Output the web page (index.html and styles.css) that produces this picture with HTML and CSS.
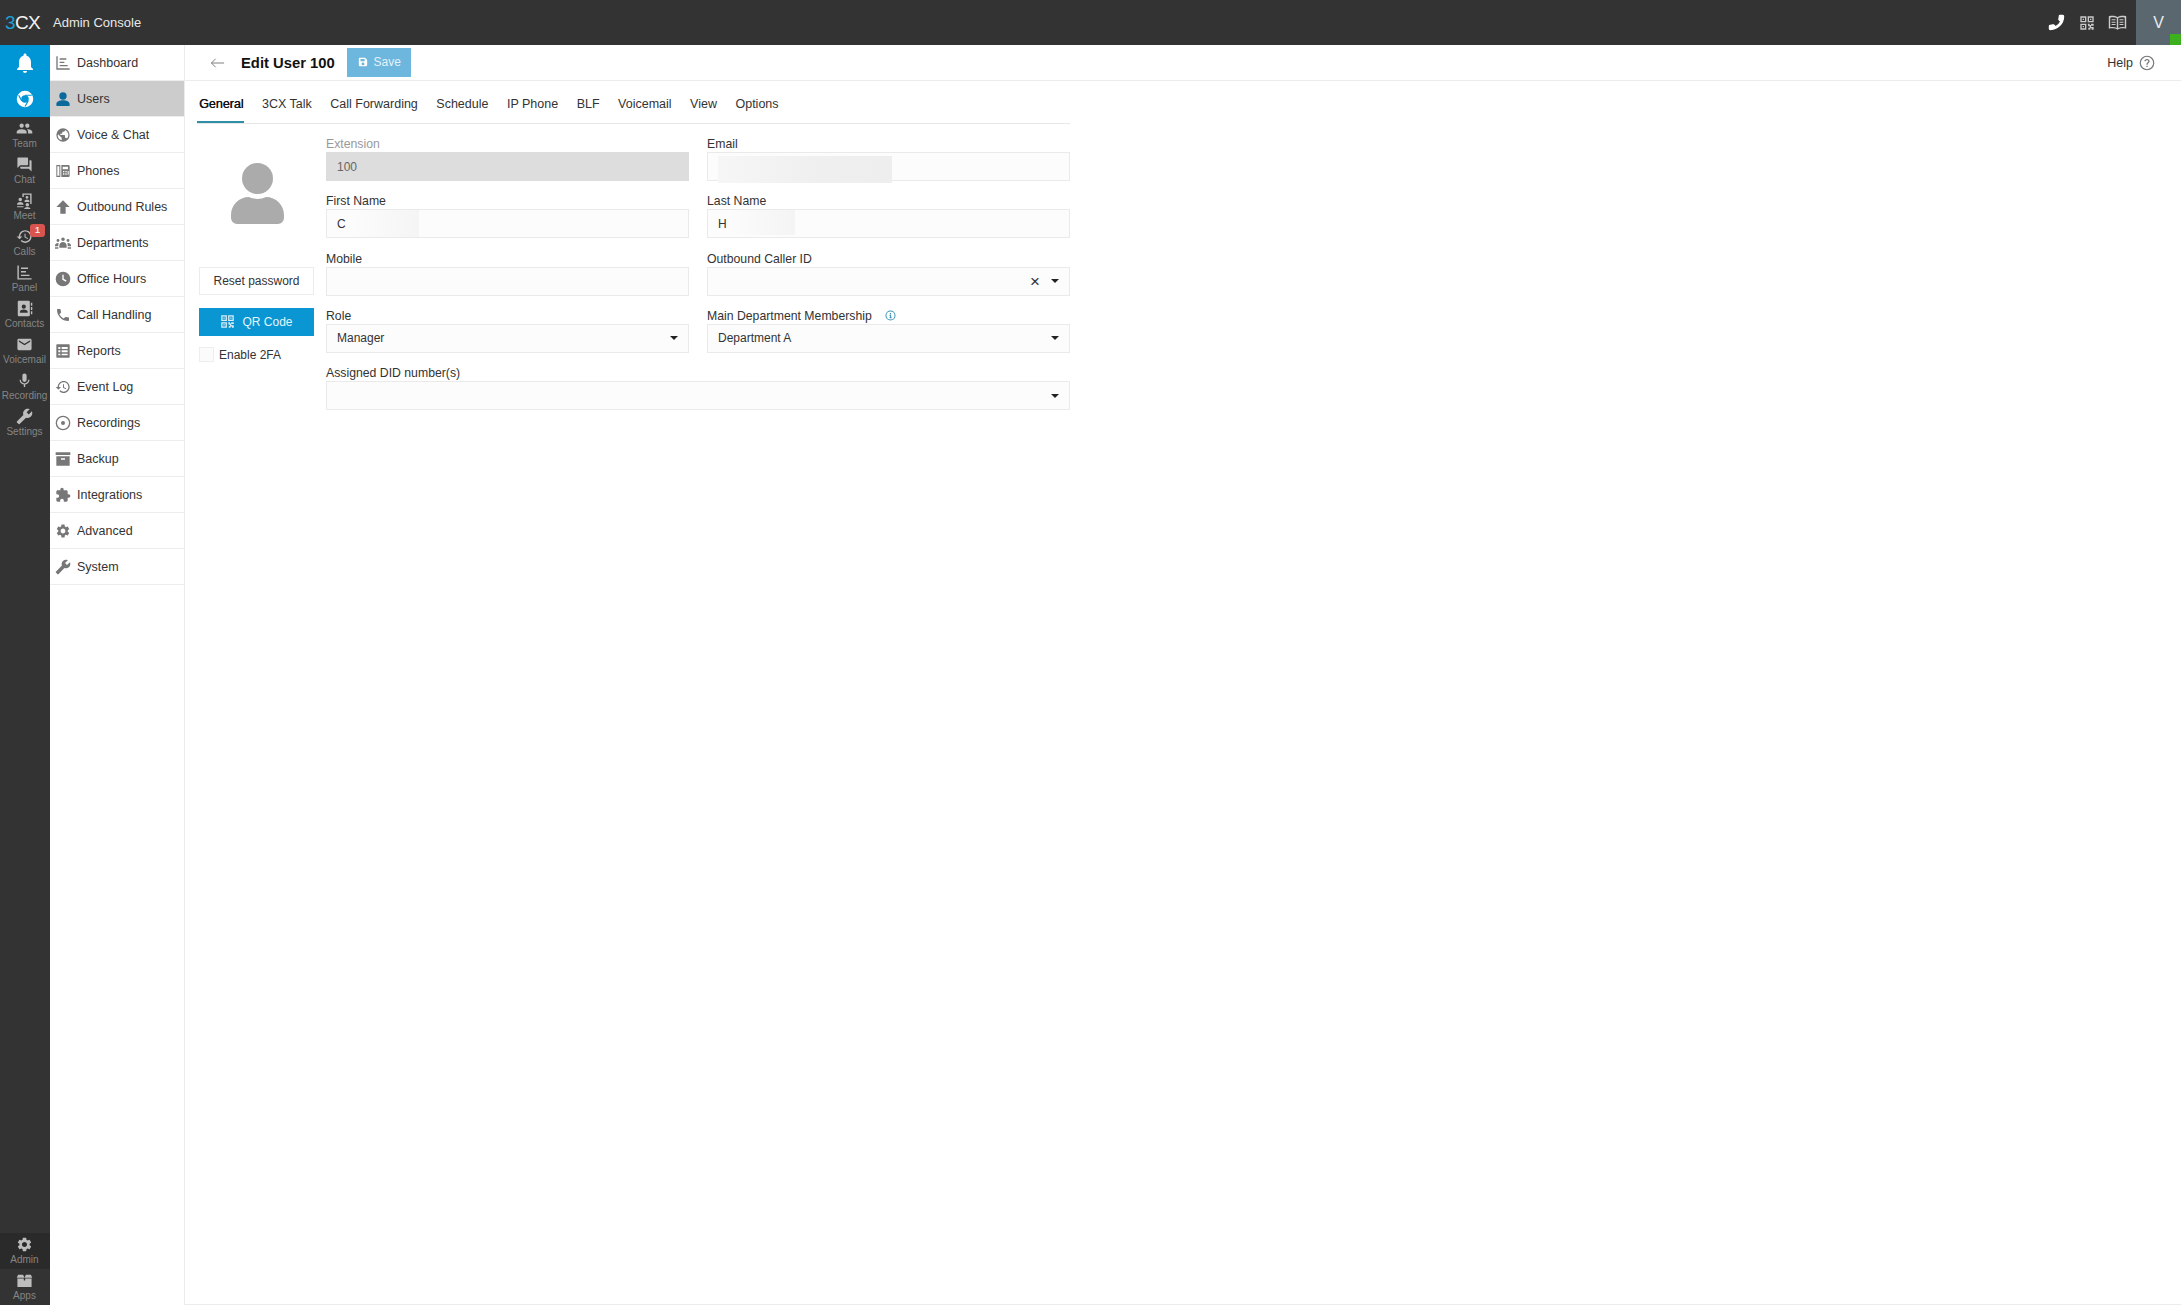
FILE: index.html
```html
<!DOCTYPE html>
<html lang="en">
<head>
<meta charset="utf-8">
<title>Admin Console</title>
<link rel="stylesheet" href="styles.css">
</head>
<body>
<svg class="sprite" xmlns="http://www.w3.org/2000/svg">
  <symbol id="i-bell" viewBox="0 0 24 24"><path d="M12 22c1.100 0 2-.9 2-2h-4c0 1.100.9 2 2 2zm6-6v-5c0-3.070-1.630-5.640-4.500-6.320V4c0-.83-.67-1.500-1.500-1.500s-1.500.67-1.500 1.500v.68C7.640 5.360 6 7.920 6 11v5l-2 2v1h16v-1l-2-2z"/></symbol>
  <symbol id="i-chrome" viewBox="0 0 24 24"><path fill-rule="evenodd" d="M12 1a11 11 0 1 0 0 22 11 11 0 0 0 0-22zm0 6a5 5 0 1 1 0 10 5 5 0 0 1 0-10z"/><path class="chrome-slit" d="M12 7h9M7.700 14.500L3.500 7M16.300 14.500L12 22"/></symbol>
  <symbol id="i-group" viewBox="0 0 24 24"><path d="M16 11c1.660 0 2.990-1.340 2.990-3S17.660 5 16 5c-1.660 0-3 1.340-3 3s1.340 3 3 3zm-8 0c1.660 0 2.990-1.340 2.990-3S9.660 5 8 5C6.340 5 5 6.340 5 8s1.340 3 3 3zm0 2c-2.330 0-7 1.170-7 3.500V19h14v-2.500c0-2.330-4.670-3.500-7-3.500zm8 0c-.29 0-.62.02-.97.05 1.160.84 1.970 1.970 1.970 3.450V19h6v-2.500c0-2.330-4.670-3.500-7-3.500z"/></symbol>
  <symbol id="i-chat" viewBox="0 0 24 24"><path d="M21 6h-2v9H6v2c0 .55.45 1 1 1h11l4 4V7c0-.55-.45-1-1-1zm-4 6V3c0-.55-.45-1-1-1H3c-.55 0-1 .45-1 1v14l4-4h10c.55 0 1-.45 1-1z"/></symbol>
  <symbol id="i-meet" viewBox="0 0 24 24"><path d="M9 2h13v15h-2V4H11v3H9zM15.500 5.500a2 2 0 1 1 0 4 2 2 0 0 1 0-4zM12 13c0-1.500 2-2.500 3.500-2.500S19 11.500 19 13v1h-7zM6 8a2.500 2.500 0 1 1 0 5 2.500 2.500 0 0 1 0-5zM1.500 17c0-2 3-3 4.500-3s4.500 1 4.500 3v1h-9zM16 15.500a2.500 2.500 0 1 1 0 5 2.500 2.500 0 0 1 0-5zM11.500 24c0-2 3-3 4.500-3s4.500 1 4.500 3zM1.500 20h9v1.500h-9z"/></symbol>
  <symbol id="i-history" viewBox="0 0 24 24"><path d="M13 3c-4.970 0-9 4.030-9 9H1l3.890 3.890.07.14L9 12H6c0-3.870 3.130-7 7-7s7 3.130 7 7-3.130 7-7 7c-1.930 0-3.680-.79-4.940-2.060l-1.420 1.420C8.270 19.990 10.510 21 13 21c4.970 0 9-4.030 9-9s-4.030-9-9-9zm-1 5v5l4.280 2.540.72-1.210-3.500-2.080V8H12z"/></symbol>
  <symbol id="i-panel" viewBox="0 0 24 24"><path d="M2 2h2v18h18v2H2zM7 5h10v2H7zM7 10h7v2H7zM7 15h12v2H7z"/></symbol>
  <symbol id="i-contacts" viewBox="0 0 24 24"><path fill-rule="evenodd" d="M4 1h14a1.500 1.500 0 0 1 1.500 1.500v19A1.500 1.500 0 0 1 18 23H4a1.500 1.500 0 0 1-1.500-1.500v-19A1.500 1.500 0 0 1 4 1zm7 5.500a3 3 0 1 0 0 6 3 3 0 0 0 0-6zM5.500 18h11v-1.500c0-2-3.500-3-5.500-3s-5.500 1-5.500 3zM21 4h2v4h-2zM21 10h2v4h-2zM21 16h2v4h-2z"/></symbol>
  <symbol id="i-mail" viewBox="0 0 24 24"><path d="M20 4H4c-1.100 0-1.990.9-1.990 2L2 18c0 1.100.9 2 2 2h16c1.100 0 2-.9 2-2V6c0-1.100-.9-2-2-2zm0 4l-8 5-8-5V6l8 5 8-5v2z"/></symbol>
  <symbol id="i-mic" viewBox="0 0 24 24"><path d="M12 14c1.660 0 2.990-1.340 2.990-3L15 5c0-1.660-1.340-3-3-3S9 3.340 9 5v6c0 1.660 1.340 3 3 3zm5.300-3c0 3-2.540 5.100-5.300 5.100S6.700 14 6.700 11H5c0 3.410 2.720 6.230 6 6.720V21h2v-3.280c3.280-.48 6-3.300 6-6.720h-1.700z"/></symbol>
  <symbol id="i-wrench" viewBox="0 0 24 24"><path transform="translate(24 0) scale(-1 1)" d="M22.700 19l-9.100-9.100c.9-2.300.4-5-1.500-6.900-2-2-5-2.400-7.400-1.300L9 6 6 9 1.600 4.700C.4 7.100.9 10.100 2.900 12.100c1.900 1.900 4.600 2.400 6.900 1.500l9.100 9.100c.4.4 1 .4 1.400 0l2.300-2.300c.5-.4.5-1.100.1-1.400z"/></symbol>
  <symbol id="i-gear" viewBox="0 0 24 24"><path d="M19.140 12.940c.04-.3.06-.61.06-.94 0-.32-.02-.64-.07-.94l2.030-1.580c.18-.14.23-.41.12-.61l-1.920-3.320c-.12-.22-.37-.29-.59-.22l-2.390.96c-.5-.38-1.030-.7-1.620-.94l-.36-2.540c-.04-.24-.24-.41-.48-.41h-3.840c-.24 0-.43.17-.47.41l-.36 2.540c-.59.24-1.130.57-1.620.94l-2.390-.96c-.22-.08-.47 0-.59.22L2.740 8.870c-.12.21-.08.47.12.61l2.030 1.580c-.05.3-.09.63-.09.94s.02.64.07.94l-2.030 1.580c-.18.14-.23.41-.12.61l1.920 3.320c.12.22.37.29.59.22l2.390-.96c.5.38 1.030.7 1.620.94l.36 2.540c.05.24.24.41.48.41h3.840c.24 0 .44-.17.47-.41l.36-2.540c.59-.24 1.130-.56 1.620-.94l2.390.96c.22.08.47 0 .59-.22l1.920-3.320c.12-.22.07-.47-.12-.61l-2.010-1.580zM12 15.600c-1.980 0-3.600-1.620-3.600-3.600s1.620-3.600 3.600-3.600 3.600 1.620 3.600 3.600-1.620 3.600-3.600 3.600z"/></symbol>
  <symbol id="i-apps" viewBox="0 0 24 24"><path fill-rule="evenodd" d="M2 9h20v12H2zM3 4h7l2 4H1zM14 4h7l2 4H12zM11 9h2v3h-2z"/></symbol>
  <symbol id="i-user" viewBox="0 0 24 24"><path d="M12 2a5.500 5.500 0 1 1 0 11 5.500 5.500 0 0 1 0-11zM2 20c0-4 5-6 10-6s10 2 10 6v1.500a1 1 0 0 1-1 1H3a1 1 0 0 1-1-1z"/></symbol>
  <symbol id="i-photo" viewBox="0 0 53 61"><circle cx="26.500" cy="15.500" r="15.500"/><path d="M0 52c0-10 8-18 18-18 5 2.500 12 2.500 17 0 10 0 18 8 18 18v3a6 6 0 0 1-6 6H6a6 6 0 0 1-6-6z"/></symbol>
  <symbol id="i-globe" viewBox="0 0 24 24"><path d="M12 2a10 10 0 1 0 0 20 10 10 0 0 0 0-20zm-1 17.900A8 8 0 0 1 4 12l1-.8 5 5v1.800c0 1 .5 1.900 1 1.900zm6.900-2.500A2 2 0 0 0 16 16h-1v-3a1 1 0 0 0-1-1H8v-2h2a1 1 0 0 0 1-1V7h2a2 2 0 0 0 2-2v-.4a8 8 0 0 1 2.900 12.800z"/></symbol>
  <symbol id="i-deskphone" viewBox="0 0 24 24"><path fill-rule="evenodd" d="M2 3h6v18H2zM3.500 5v14h3V5zM9.500 3H20a2 2 0 0 1 2 2v14a2 2 0 0 1-2 2H9.500zm2 2.500v4h8v-4zM12 12v2h2v-2zm3.500 0v2h2v-2zM12 15.500v2h2v-2zm3.500 0v2h2v-2zM19 12v5.500h1.500V12z"/></symbol>
  <symbol id="i-up" viewBox="0 0 24 24"><path d="M12 2l10 10h-6v10H8V12H2z"/></symbol>
  <symbol id="i-dept" viewBox="0 0 24 24"><path d="M12 9a2.700 2.700 0 1 1 0-5.400A2.700 2.700 0 0 1 12 9zM6.500 16c0-3 2.500-5.500 5.500-5.500s5.500 2.500 5.500 5.500v3h-11zM4.500 10.500a2.200 2.200 0 1 1 0-4.400 2.200 2.200 0 0 1 0 4.400zM0 16c0-2.500 2-4 4.500-4 .4 0 .6 0 1 .1A7 7 0 0 0 5 15v2H0zM19.500 10.500a2.200 2.200 0 1 1 0-4.400 2.200 2.200 0 0 1 0 4.400zM24 16v1h-5v-2a7 7 0 0 0-.5-2.900c.4-.1.600-.1 1-.1 2.500 0 4.500 1.500 4.500 4zM0 18.500h5v2H0zM19 18.500h5v2h-5z"/></symbol>
  <symbol id="i-clock" viewBox="0 0 24 24"><path fill-rule="evenodd" d="M12 1a11 11 0 1 0 0 22 11 11 0 0 0 0-22zm-1 4.500h2v6.200l4.300 2.600-1 1.700L11 13z"/></symbol>
  <symbol id="i-phone" viewBox="0 0 24 24"><path d="M6.620 10.790c1.440 2.830 3.760 5.140 6.590 6.590l2.200-2.200c.27-.27.67-.36 1.020-.24 1.120.37 2.330.57 3.570.57.55 0 1 .45 1 1V20c0 .55-.45 1-1 1-9.390 0-17-7.610-17-17 0-.55.45-1 1-1h3.500c.55 0 1 .45 1 1 0 1.250.2 2.450.57 3.570.11.35.03.74-.25 1.020l-2.200 2.200z"/></symbol>
  <symbol id="i-phone-r" viewBox="0 0 24 24"><path transform="translate(24 0) scale(-1 1)" d="M6.620 10.790c1.440 2.830 3.760 5.140 6.590 6.590l2.200-2.200c.27-.27.67-.36 1.020-.24 1.120.37 2.330.57 3.570.57.55 0 1 .45 1 1V20c0 .55-.45 1-1 1-9.390 0-17-7.610-17-17 0-.55.45-1 1-1h3.500c.55 0 1 .45 1 1 0 1.250.2 2.450.57 3.570.11.35.03.74-.25 1.020l-2.200 2.200z"/></symbol>
  <symbol id="i-reports" viewBox="0 0 24 24"><path fill-rule="evenodd" d="M3 2h18a1 1 0 0 1 1 1v18a1 1 0 0 1-1 1H3a1 1 0 0 1-1-1V3a1 1 0 0 1 1-1zm2 4v3h3V6zm5 0v3h9V6zm-5 5v3h3v-3zm5 0v3h9v-3zm-5 5v2.500h3V16zm5 0v2.500h9V16z"/></symbol>
  <symbol id="i-rec" viewBox="0 0 24 24"><path fill-rule="evenodd" d="M12 1a11 11 0 1 0 0 22 11 11 0 0 0 0-22zm0 2a9 9 0 1 1 0 18 9 9 0 0 1 0-18zm0 6a3 3 0 1 0 0 6 3 3 0 0 0 0-6z"/></symbol>
  <symbol id="i-backup" viewBox="0 0 24 24"><path fill-rule="evenodd" d="M1 2h22v4H1zM2 8h20v14H2zm7 3v2h6v-2z"/></symbol>
  <symbol id="i-puzzle" viewBox="0 0 24 24"><path d="M20.500 11H19V7c0-1.100-.9-2-2-2h-4V3.500C13 2.120 11.880 1 10.500 1S8 2.120 8 3.500V5H4c-1.100 0-1.990.9-1.990 2v3.800H3.500c1.490 0 2.700 1.210 2.700 2.700s-1.210 2.700-2.700 2.700H2V20c0 1.100.9 2 2 2h3.800v-1.500c0-1.490 1.210-2.700 2.700-2.700 1.490 0 2.700 1.210 2.700 2.700V22H17c1.100 0 2-.9 2-2v-4h1.500c1.380 0 2.500-1.120 2.500-2.500S21.880 11 20.500 11z"/></symbol>
  <symbol id="i-qr" viewBox="0 0 24 24"><path fill-rule="evenodd" d="M2 2h9v9H2zm2 2v5h5V4zm1.500 1.500h2v2h-2zM13 2h9v9h-9zm2 2v5h5V4zm1.500 1.500h2v2h-2zM2 13h9v9H2zm2 2v5h5v-5zm1.500 1.500h2v2h-2zM13 13h3v2h2v-2h4v3h-4v2h4v4h-3v-2h-2v2h-3v-3h2v-2h-2z"/></symbol>
  <symbol id="i-book" viewBox="0 0 24 24"><path fill-rule="evenodd" d="M1 4c3.500-1 8-.8 11 1 3-1.800 7.500-2 11-1v16c-3.500-1-8-.8-11 1-3-1.800-7.500-2-11-1zm1.800 2v12c2.700-.5 6-.2 8.300.8V6.300C8.800 5.300 5.500 5.300 2.800 6zm18.400 0c-2.700-.7-6-.7-8.300.3v12.500c2.300-1 5.600-1.300 8.300-.8zM4.500 8h5v1.200h-5zm0 3h5v1.200h-5zm0 3h5v1.200h-5zm10-6h5v1.200h-5zm0 3h5v1.200h-5zm0 3h5v1.200h-5z"/></symbol>
  <symbol id="i-save" viewBox="0 0 24 24"><path fill-rule="evenodd" d="M4 2h13l5 5v13a2 2 0 0 1-2 2H4a2 2 0 0 1-2-2V4a2 2 0 0 1 2-2zm2 3v5h10V5zm6 8a3.500 3.500 0 1 0 0 7 3.500 3.500 0 0 0 0-7z"/></symbol>
  <symbol id="i-help" viewBox="0 0 24 24"><path fill-rule="evenodd" d="M12 1a11 11 0 1 0 0 22 11 11 0 0 0 0-22zm0 1.800a9.200 9.200 0 1 1 0 18.400 9.200 9.200 0 0 1 0-18.400zM11 16h2v2h-2zM12 6c-2.200 0-4 1.500-4 3.500h2c0-1 1-1.700 2-1.700s2 .7 2 1.700c0 1.800-3 1.800-3 5h2c0-2.300 3-2.800 3-5C16 7.500 14.200 6 12 6z"/></symbol>
  <symbol id="i-info" viewBox="0 0 24 24"><path fill-rule="evenodd" d="M12 1a11 11 0 1 0 0 22 11 11 0 0 0 0-22zm0 2.200a8.800 8.800 0 1 1 0 17.600 8.800 8.800 0 0 1 0-17.600zM10.700 6.500h2.600V9h-2.600zM9.800 10.500h3.500V16h1.200v1.800H9.800V16h1.200v-3.700H9.800z"/></symbol>
</svg>

<header class="topbar">
  <div class="brand">
    <span class="logo"><span class="logo-three">3</span>CX</span>
    <span class="brand-title">Admin Console</span>
  </div>
  <div class="top-actions">
    <svg class="top-icon top-phone"><use href="#i-phone-r"/></svg>
    <svg class="top-icon top-qr"><use href="#i-qr"/></svg>
    <svg class="top-icon top-book"><use href="#i-book"/></svg>
    <div class="avatar-box">V<span class="presence"></span></div>
  </div>
</header>

<div class="shell">
  <aside class="rail">
    <div class="rail-alert">
      <div class="alert-cell"><svg class="alert-bell"><use href="#i-bell"/></svg></div>
      <div class="alert-cell"><svg class="alert-chrome"><use href="#i-chrome"/></svg></div>
    </div>
    <a class="rail-item"><svg class="rail-icon"><use href="#i-group"/></svg><span>Team</span></a>
    <a class="rail-item"><svg class="rail-icon"><use href="#i-chat"/></svg><span>Chat</span></a>
    <a class="rail-item"><svg class="rail-icon"><use href="#i-meet"/></svg><span>Meet</span></a>
    <a class="rail-item"><svg class="rail-icon"><use href="#i-history"/></svg><span>Calls</span><b class="badge">1</b></a>
    <a class="rail-item"><svg class="rail-icon"><use href="#i-panel"/></svg><span>Panel</span></a>
    <a class="rail-item"><svg class="rail-icon"><use href="#i-contacts"/></svg><span>Contacts</span></a>
    <a class="rail-item"><svg class="rail-icon"><use href="#i-mail"/></svg><span>Voicemail</span></a>
    <a class="rail-item"><svg class="rail-icon"><use href="#i-mic"/></svg><span>Recording</span></a>
    <a class="rail-item"><svg class="rail-icon"><use href="#i-wrench"/></svg><span>Settings</span></a>
    <div class="rail-spacer"></div>
    <a class="rail-item rail-admin"><svg class="rail-icon"><use href="#i-gear"/></svg><span>Admin</span></a>
    <a class="rail-item"><svg class="rail-icon"><use href="#i-apps"/></svg><span>Apps</span></a>
  </aside>

  <nav class="nav">
    <a class="nav-item"><svg class="nav-icon"><use href="#i-panel"/></svg>Dashboard</a>
    <a class="nav-item nav-active"><svg class="nav-icon"><use href="#i-user"/></svg>Users</a>
    <a class="nav-item"><svg class="nav-icon"><use href="#i-globe"/></svg>Voice &amp; Chat</a>
    <a class="nav-item"><svg class="nav-icon"><use href="#i-deskphone"/></svg>Phones</a>
    <a class="nav-item"><svg class="nav-icon"><use href="#i-up"/></svg>Outbound Rules</a>
    <a class="nav-item"><svg class="nav-icon"><use href="#i-dept"/></svg>Departments</a>
    <a class="nav-item"><svg class="nav-icon"><use href="#i-clock"/></svg>Office Hours</a>
    <a class="nav-item"><svg class="nav-icon"><use href="#i-phone"/></svg>Call Handling</a>
    <a class="nav-item"><svg class="nav-icon"><use href="#i-reports"/></svg>Reports</a>
    <a class="nav-item"><svg class="nav-icon"><use href="#i-history"/></svg>Event Log</a>
    <a class="nav-item"><svg class="nav-icon"><use href="#i-rec"/></svg>Recordings</a>
    <a class="nav-item"><svg class="nav-icon"><use href="#i-backup"/></svg>Backup</a>
    <a class="nav-item"><svg class="nav-icon"><use href="#i-puzzle"/></svg>Integrations</a>
    <a class="nav-item"><svg class="nav-icon"><use href="#i-gear"/></svg>Advanced</a>
    <a class="nav-item"><svg class="nav-icon"><use href="#i-wrench"/></svg>System</a>
  </nav>

  <main class="content">
    <div class="page-head">
      <div class="head-left">
        <svg class="back" viewBox="0 0 16 12"><path d="M15 6H1.500M6 1.500L1.500 6 6 10.500"/></svg>
        <h1 class="title">Edit User 100</h1>
        <button class="btn-save"><svg class="save-icon"><use href="#i-save"/></svg>Save</button>
      </div>
      <div class="help">Help<svg class="help-icon"><use href="#i-help"/></svg></div>
    </div>

    <div class="tabs">
      <a class="tab tab-active">General</a>
      <a class="tab">3CX Talk</a>
      <a class="tab">Call Forwarding</a>
      <a class="tab">Schedule</a>
      <a class="tab">IP Phone</a>
      <a class="tab">BLF</a>
      <a class="tab">Voicemail</a>
      <a class="tab">View</a>
      <a class="tab">Options</a>
    </div>

    <div class="panel">
      <div class="side">
        <svg class="photo"><use href="#i-photo"/></svg>
        <button class="btn-reset">Reset password</button>
        <button class="btn-qr"><svg class="qr-icon"><use href="#i-qr"/></svg>QR Code</button>
        <label class="check"><span class="check-box"></span>Enable 2FA</label>
      </div>
      <div class="form">
        <div class="field">
          <label class="label label-off">Extension</label>
          <div class="input input-off">100</div>
        </div>
        <div class="field">
          <label class="label">Email</label>
          <div class="input"><span class="blur blur-email"></span></div>
        </div>
        <div class="field">
          <label class="label">First Name</label>
          <div class="input">C<span class="blur blur-first"></span></div>
        </div>
        <div class="field">
          <label class="label">Last Name</label>
          <div class="input">H<span class="blur blur-last"></span></div>
        </div>
        <div class="field">
          <label class="label">Mobile</label>
          <div class="input"></div>
        </div>
        <div class="field">
          <label class="label">Outbound Caller ID</label>
          <div class="input input-select"><span class="value"></span><span class="clear">×</span><span class="caret"></span></div>
        </div>
        <div class="field">
          <label class="label">Role</label>
          <div class="input input-select"><span class="value">Manager</span><span class="caret"></span></div>
        </div>
        <div class="field">
          <label class="label">Main Department Membership<svg class="info"><use href="#i-info"/></svg></label>
          <div class="input input-select"><span class="value">Department A</span><span class="caret"></span></div>
        </div>
        <div class="field field-wide">
          <label class="label">Assigned DID number(s)</label>
          <div class="input input-select"><span class="value"></span><span class="caret"></span></div>
        </div>
      </div>
    </div>
  </main>
</div>
</body>
</html>
```

FILE: styles.css
```css
* { box-sizing: border-box; }
html, body { height: 100%; }
body {
  margin: 0;
  display: flex;
  flex-direction: column;
  height: 1305px;
  overflow: hidden;
  font-family: "Liberation Sans", Arial, sans-serif;
  font-size: 12px;
  color: #333;
  background: #fff;
}
.sprite { position: absolute; width: 0; height: 0; }
svg { fill: currentColor; display: block; }

/* top bar */
.topbar {
  flex: none;
  height: 45px;
  background: #333;
  color: #fff;
  display: flex;
  justify-content: space-between;
}
.brand { display: flex; align-items: center; padding-left: 5px; }
.logo {
  width: 48px;
  font-size: 19px;
  letter-spacing: -0.6px;
  color: #f2f2f2;
}
.logo-three { color: #1ba1d8; }
.brand-title { font-size: 13px; color: #e8e8e8; }
.top-actions { display: flex; align-items: center; }
.top-icon { color: #eee; }
.top-phone { width: 19px; height: 19px; color: #fff; stroke: #fff; stroke-width: 1.500; margin-right: 13px; }
.top-qr { width: 16px; height: 16px; color: #ccc; margin-right: 13px; }
.top-book { width: 19px; height: 19px; color: #ccc; margin-right: 9px; }
.avatar-box {
  position: relative;
  width: 45px;
  height: 45px;
  background: #5a676e;
  color: #e8eef1;
  font-size: 16px;
  display: flex;
  align-items: center;
  justify-content: center;
}
.presence {
  position: absolute;
  right: 0;
  bottom: 0;
  width: 11px;
  height: 11px;
  background: #3cb01e;
}

/* layout */
.shell { flex: 1; display: flex; min-height: 0; }

/* icon rail */
.rail {
  flex: none;
  width: 50px;
  background: #333;
  color: #bbb;
  display: flex;
  flex-direction: column;
}
.rail-alert { background: #0096d6; color: #fff; }
.alert-cell { height: 36px; display: flex; align-items: center; justify-content: center; padding-right: 1px; }
.alert-bell { width: 24px; height: 24px; }
.alert-chrome { width: 18px; height: 18px; }
.chrome-slit { fill: none; stroke: #0096d6; stroke-width: 1.500; }
.rail-item {
  position: relative;
  height: 36px;
  display: flex;
  flex-direction: column;
  align-items: center;
  padding: 3px 1px 0 0;
  font-size: 10px;
  line-height: 11px;
  color: #858585;
}
.rail-icon { width: 17px; height: 17px; color: #bdbdbd; margin-bottom: 1px; }
.rail-spacer { flex: 1; }
.rail-admin { background: #2a2a2a; }
.badge {
  position: absolute;
  top: -1px;
  right: 5px;
  width: 15px;
  height: 13px;
  border-radius: 3px;
  background: #d9534f;
  color: #f3e5e3;
  font-size: 9px;
  line-height: 13px;
  text-align: center;
}

/* side navigation */
.nav {
  flex: none;
  width: 135px;
  border-right: 1px solid #ececec;
  display: flex;
  flex-direction: column;
}
.nav-item {
  height: 36px;
  display: flex;
  align-items: center;
  padding: 0 0 0 5px;
  gap: 6px;
  border-bottom: 1px solid #ededed;
  font-size: 12.500px;
  color: #333;
}
.nav-icon { width: 16px; height: 16px; color: #777; flex: none; }
.nav-active { background: #ccc; }
.nav-active .nav-icon { color: #0a6a9c; }

/* main content */
.content { flex: 1; min-width: 0; border-bottom: 1px solid #ececec; }
.page-head {
  height: 36px;
  border-bottom: 1px solid #ececec;
  display: flex;
  align-items: center;
  justify-content: space-between;
  padding: 0 26px 0 25px;
}
.head-left { display: flex; align-items: center; }
.back {
  width: 15px;
  height: 12px;
  fill: none;
  stroke: #777;
  stroke-width: 1;
  margin-right: 16px;
}
.title { margin: 0 12px 0 0; font-size: 14.800px; font-weight: 700; color: #111; }
.btn-save {
  height: 29px;
  width: 64px;
  border: 0;
  background: #6db6dd;
  color: #e4f2f9;
  font: inherit;
  display: flex;
  align-items: center;
  justify-content: center;
  gap: 6px;
  padding: 0 0 1px 1px;
}
.save-icon { width: 10px; height: 10px; color: #fff; }
.help { display: flex; align-items: center; gap: 6px; color: #333; font-size: 12.500px; }
.help-icon { width: 16px; height: 16px; color: #777; }

.tabs {
  width: 873px;
  margin-left: 12px;
  height: 43px;
  border-bottom: 1px solid #e8e8e8;
  display: flex;
  gap: 14.500px;
  padding-top: 16px;
  font-size: 12.500px;
  line-height: 15px;
}
.tab { padding: 0 2px; height: 26px; color: #333; }
.tab-active {
  color: #111;
  text-shadow: 0.400px 0 0 #111;
  border-bottom: 2px solid #2f8fa6;
  margin-right: 1px;
  padding: 0 1px 0 2px;
}

/* form panel */
.panel { display: flex; padding: 13px 0 0 14px; gap: 12px; }
.side { flex: none; width: 115px; display: flex; flex-direction: column; }
.photo { width: 53px; height: 61px; color: #ababab; margin: 26px 0 43px 32px; }
.btn-reset, .btn-qr {
  height: 28px;
  width: 115px;
  font: inherit;
  padding: 0 0 1px;
}
.btn-reset { background: #fff; border: 1px solid #ececec; color: #333; }
.btn-qr {
  margin-top: 13px;
  border: 0;
  background: #0a96d2;
  color: #e4f4fb;
  display: flex;
  align-items: center;
  justify-content: center;
  gap: 7px;
}
.qr-icon { width: 15px; height: 15px; color: #dceff8; }
.check { display: flex; align-items: center; gap: 5px; margin-top: 11px; height: 15px; }
.check-box { width: 15px; height: 15px; background: #fbfbfb; border: 1px solid #eee; }

.form {
  width: 744px;
  display: grid;
  grid-template-columns: 363px 363px;
  column-gap: 18px;
  row-gap: 13.250px;
}
.field-wide { grid-column: 1 / -1; }
.label { display: flex; align-items: flex-start; height: 15px; line-height: 14px; font-size: 12.250px; color: #333; }
.label-off { color: #999; }
.info { width: 11px; height: 11px; color: #3d94b8; margin: 1px 0 0 13px; }
.input {
  position: relative;
  height: 29px;
  background: #fcfcfc;
  border: 1px solid #eaeaea;
  display: flex;
  align-items: center;
  padding: 0 10px;
  font-size: 12px;
  color: #333;
}
.input-off { background: #ddd; border-color: #ddd; color: #666; }
.blur { position: absolute; top: 2px; bottom: -4px; }
.blur-email {
  left: 10px;
  width: 174px;
  top: 3px;
  bottom: -3px;
  background: linear-gradient(90deg, #f6f6f6, #efefef 60%, #eeeeee);
}
.blur-first { left: 24px; width: 68px; top: 0; bottom: 0; background: linear-gradient(90deg, #fcfcfc, #f5f5f5); }
.blur-last { left: 20px; width: 67px; top: 0; bottom: 2px; background: linear-gradient(90deg, #fcfcfc, #f4f4f4); }
.input-select { padding-right: 10px; }
.value { flex: 1; }
.clear { font-size: 17px; line-height: 15px; color: #333; margin-right: 11px; }
.caret {
  width: 0;
  height: 0;
  border-left: 4px solid transparent;
  border-right: 4px solid transparent;
  border-top: 4px solid #222;
}
```
